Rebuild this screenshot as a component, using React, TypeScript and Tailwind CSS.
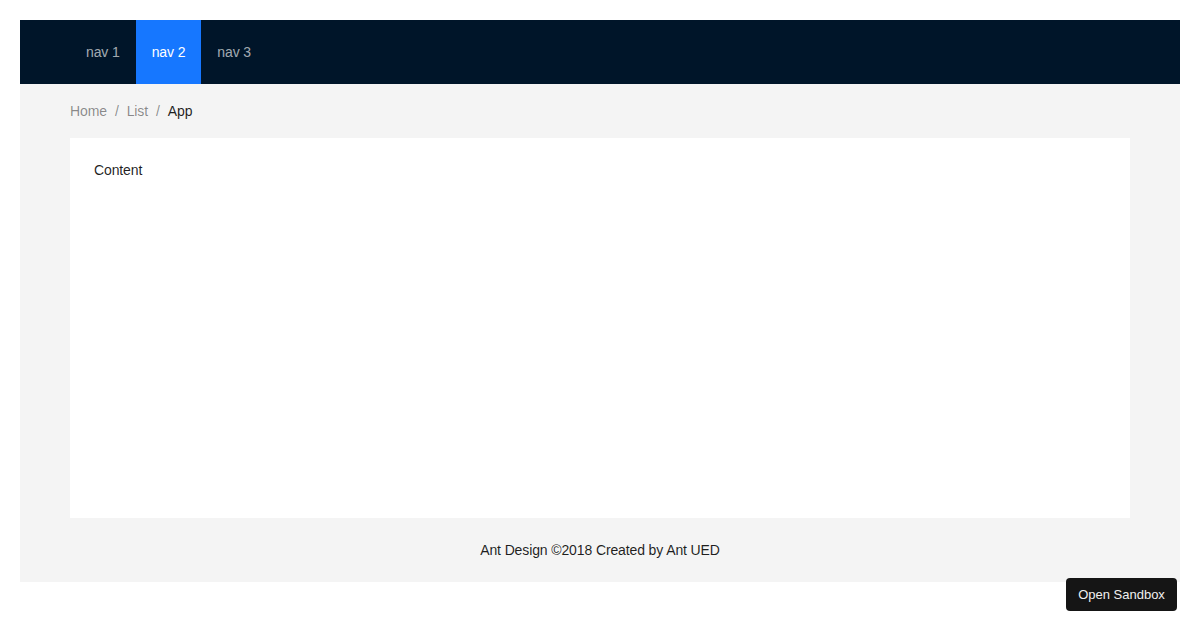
import React from 'react';

export default function App() {
  const navs = ['nav 1', 'nav 2', 'nav 3'];

  return (
    <div className="relative h-[630px] w-[1200px] bg-white p-5 text-[14px] tracking-[-0.12px] text-[rgba(0,0,0,0.88)] [font-family:'Liberation_Sans',Arial,sans-serif]">
      <div className="flex flex-col">
        <header className="flex h-16 items-stretch bg-[#001529] pl-[50px] pr-[50px]">
          {navs.map((n) => (
            <div
              key={n}
              className={
                n === 'nav 2'
                  ? 'flex items-center bg-[#1677ff] px-4 text-white'
                  : 'flex items-center px-4 text-[rgba(255,255,255,0.65)]'
              }
            >
              {n}
            </div>
          ))}
        </header>

        <main className="bg-[#f4f4f4] px-[50px]">
          <nav className="my-4 flex items-center leading-[22px]">
            <span className="text-[rgba(0,0,0,0.45)]">Home</span>
            <span className="mx-2 text-[rgba(0,0,0,0.45)]">/</span>
            <span className="text-[rgba(0,0,0,0.45)]">List</span>
            <span className="mx-2 text-[rgba(0,0,0,0.45)]">/</span>
            <span>App</span>
          </nav>
          <div className="h-[380px] bg-white px-6 pt-[22px] leading-[20px]">Content</div>
        </main>

        <footer className="bg-[#f4f4f4] py-[21px] text-center leading-[22px]">
          Ant Design ©2018 Created by Ant UED
        </footer>
      </div>

      <button className="absolute bottom-[19px] right-[23px] flex h-[33px] w-[111px] items-center justify-center rounded-[4px] bg-[#151515] text-[13px] tracking-normal text-[#f0f0f0]">
        Open Sandbox
      </button>
    </div>
  );
}
